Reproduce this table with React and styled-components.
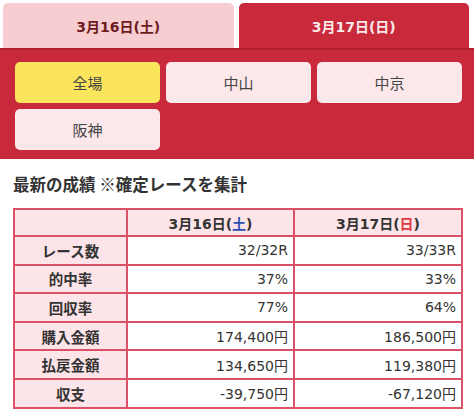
import React from "react";
import styled, { createGlobalStyle } from "styled-components";

const Global = createGlobalStyle`
  html, body { margin: 0; padding: 0; background: #fff; }
  body { font-family: "DejaVu Sans", Verdana, "Noto Sans CJK JP", sans-serif; color: #333; }
`;

const TabRow = styled.div`
  display: grid;
  grid-template-columns: 1fr 1fr;
  gap: 5px;
  padding: 3px 5px 0 3px;
`;

const Tab = styled.div`
  height: 45px;
  display: flex;
  align-items: center;
  justify-content: center;
  border-radius: 5px 5px 0 0;
  font-size: 14px;
  font-weight: bold;
  background: ${p => (p.$active ? "#c82a3b" : "#f6cdd0")};
  color: ${p => (p.$active ? "#fbe9ea" : "#6e1c1e")};
`;

const Panel = styled.div`
  background: #c82a3b;
  border-top: 2px solid #b5202f;
  padding: 12px 12px 9px 15px;
  display: grid;
  grid-template-columns: repeat(3, 1fr);
  gap: 6px;
`;

const Venue = styled.div`
  height: 41px;
  border-radius: 5px;
  display: flex;
  align-items: center;
  justify-content: center;
  font-family: "Noto Sans CJK JP", sans-serif;
  font-size: 15px;
  color: #444;
  background: ${p => (p.$active ? "#fbe55c" : "#fce8ea")};
`;

const Title = styled.h2`
  margin: 13px 0 0 13px;
  font-family: "Noto Sans CJK JP", sans-serif;
  font-size: 16.5px;
  font-weight: bold;
  line-height: 24px;
  color: #333;
`;

const Table = styled.table`
  margin: 12px 0 0 13px;
  width: 448px;
  border-collapse: collapse;
  table-layout: fixed;
  font-size: 14px;
`;

const Th = styled.th`
  height: 25px;
  border: 2px solid #da5168;
  background: #fde4e8;
  font-weight: bold;
  font-size: 14px;
  color: #333;
  text-align: center;
  padding: 0;
`;

const RowHead = styled(Th)`
  height: 26.6px;
  font-family: "Noto Sans CJK JP", sans-serif;
  font-size: 14.5px;
`;

const Td = styled.td`
  height: 26.6px;
  border: 2px solid #da5168;
  text-align: right;
  padding: 0 5px 0 0;
  color: #333;
`;

const Day = styled.span`
  color: ${p => p.$c};
`;

const rows = [
  ["レース数", "32/32R", "33/33R"],
  ["的中率", "37%", "33%"],
  ["回収率", "77%", "64%"],
  ["購入金額", "174,400円", "186,500円"],
  ["払戻金額", "134,650円", "119,380円"],
  ["収支", "-39,750円", "-67,120円"],
];

export default function App() {
  return (
    <>
      <Global />
      <TabRow>
        <Tab>3月16日(土)</Tab>
        <Tab $active>3月17日(日)</Tab>
      </TabRow>
      <Panel>
        <Venue $active>全場</Venue>
        <Venue>中山</Venue>
        <Venue>中京</Venue>
        <Venue>阪神</Venue>
      </Panel>
      <Title>最新の成績 ※確定レースを集計</Title>
      <Table>
        <colgroup>
          <col style={{ width: "113px" }} />
          <col style={{ width: "167px" }} />
          <col style={{ width: "168px" }} />
        </colgroup>
        <thead>
          <tr>
            <Th></Th>
            <Th>3月16日(<Day $c="#2a4fb5">土</Day>)</Th>
            <Th>3月17日(<Day $c="#e0383e">日</Day>)</Th>
          </tr>
        </thead>
        <tbody>
          {rows.map(r => (
            <tr key={r[0]}>
              <RowHead as="th">{r[0]}</RowHead>
              <Td>{r[1]}</Td>
              <Td>{r[2]}</Td>
            </tr>
          ))}
        </tbody>
      </Table>
    </>
  );
}
